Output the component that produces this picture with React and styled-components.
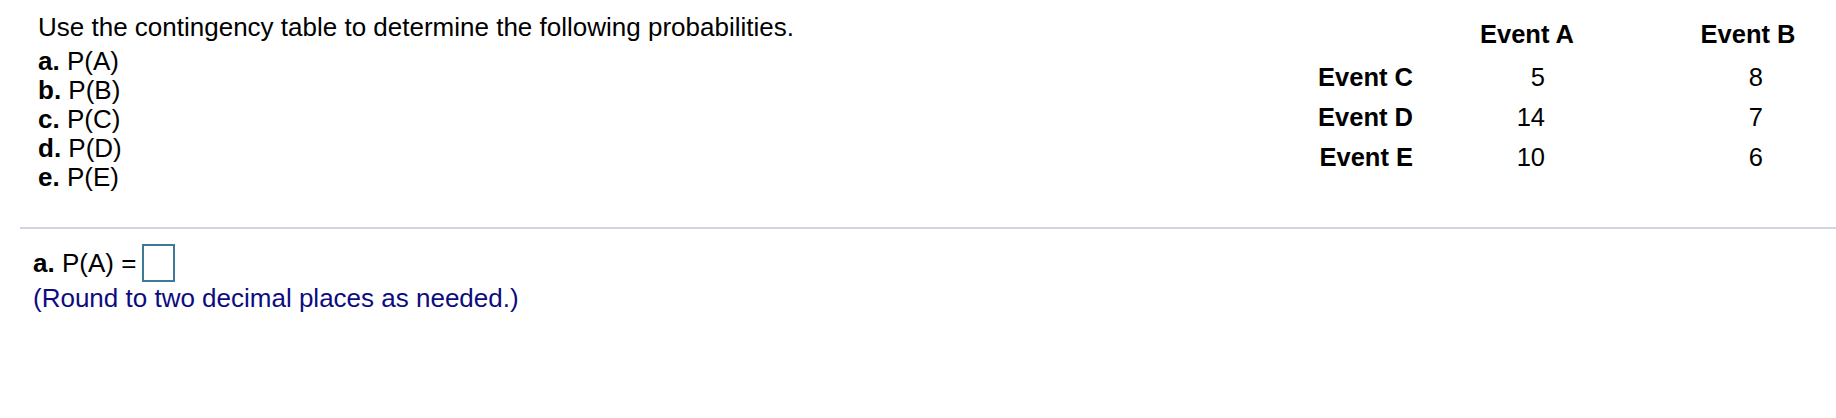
import React from "react";
import styled, { createGlobalStyle } from "styled-components";

const GlobalStyle = createGlobalStyle`
  html, body {
    margin: 0;
    padding: 0;
    background: #ffffff;
  }
  body {
    font-family: "Liberation Sans", Arial, Helvetica, sans-serif;
    color: #000000;
  }
`;

const Page = styled.div`
  width: 1836px;
  height: 418px;
  background: #ffffff;
  font-size: 26px;
  line-height: 29px;
`;

const Top = styled.div`
  display: flex;
  justify-content: space-between;
  align-items: flex-start;
  padding: 13px 1px 0 38px;
`;

const Question = styled.div`
  display: flex;
  flex-direction: column;
`;

const Prompt = styled.div`
  margin-bottom: 5px;
`;

const Item = styled.div`
  white-space: nowrap;
`;

const Bold = styled.span`
  font-weight: 700;
`;

const Table = styled.div`
  display: grid;
  grid-template-columns: auto 174px 194px;
  column-gap: 27px;
  row-gap: 11px;
  margin-top: 7px;
  font-size: 25.5px;
`;

const Corner = styled.div``;

const HeadCell = styled.div`
  font-weight: 700;
  text-align: center;
  margin-bottom: 3px;
  padding-left: ${(p) => p.$shift || 0}px;
`;

const RowLabel = styled.div`
  font-weight: 700;
  text-align: right;
`;

const NumCell = styled.div`
  text-align: right;
  padding-right: ${(p) => p.$pad}px;
`;

const Divider = styled.hr`
  margin: 35px 0 0 20px;
  border: none;
  height: 2px;
  background: #d1d5e0;
`;

const Answer = styled.div`
  padding: 15px 0 0 33px;
`;

const AnswerLine = styled.div`
  display: flex;
  align-items: center;
  height: 38px;
  white-space: pre;
`;

const AnswerBox = styled.span`
  display: inline-block;
  box-sizing: border-box;
  width: 33px;
  height: 38px;
  border: 2px solid #3d7a98;
  margin-left: 6px;
  background: #ffffff;
`;

const Hint = styled.div`
  margin-top: 2px;
  color: #0c0c80;
`;

const items = [
  ["a.", "P(A)"],
  ["b.", "P(B)"],
  ["c.", "P(C)"],
  ["d.", "P(D)"],
  ["e.", "P(E)"],
];

const rows = [
  ["Event C", 5, 8],
  ["Event D", 14, 7],
  ["Event E", 10, 6],
];

export default function App() {
  return (
    <Page>
      <GlobalStyle />
      <Top>
        <Question>
          <Prompt>Use the contingency table to determine the following probabilities.</Prompt>
          {items.map(([l, t]) => (
            <Item key={l}>
              <Bold>{l}</Bold> {t}
            </Item>
          ))}
        </Question>
        <Table>
          <Corner />
          <HeadCell>Event A</HeadCell>
          <HeadCell $shift={20}>Event B</HeadCell>
          {rows.map(([label, a, b]) => (
            <React.Fragment key={label}>
              <RowLabel>{label}</RowLabel>
              <NumCell $pad={69}>{a}</NumCell>
              <NumCell $pad={72}>{b}</NumCell>
            </React.Fragment>
          ))}
        </Table>
      </Top>
      <Divider />
      <Answer>
        <AnswerLine>
          <Bold>a.</Bold> P(A) =<AnswerBox />
        </AnswerLine>
        <Hint>(Round to two decimal places as needed.)</Hint>
      </Answer>
    </Page>
  );
}
